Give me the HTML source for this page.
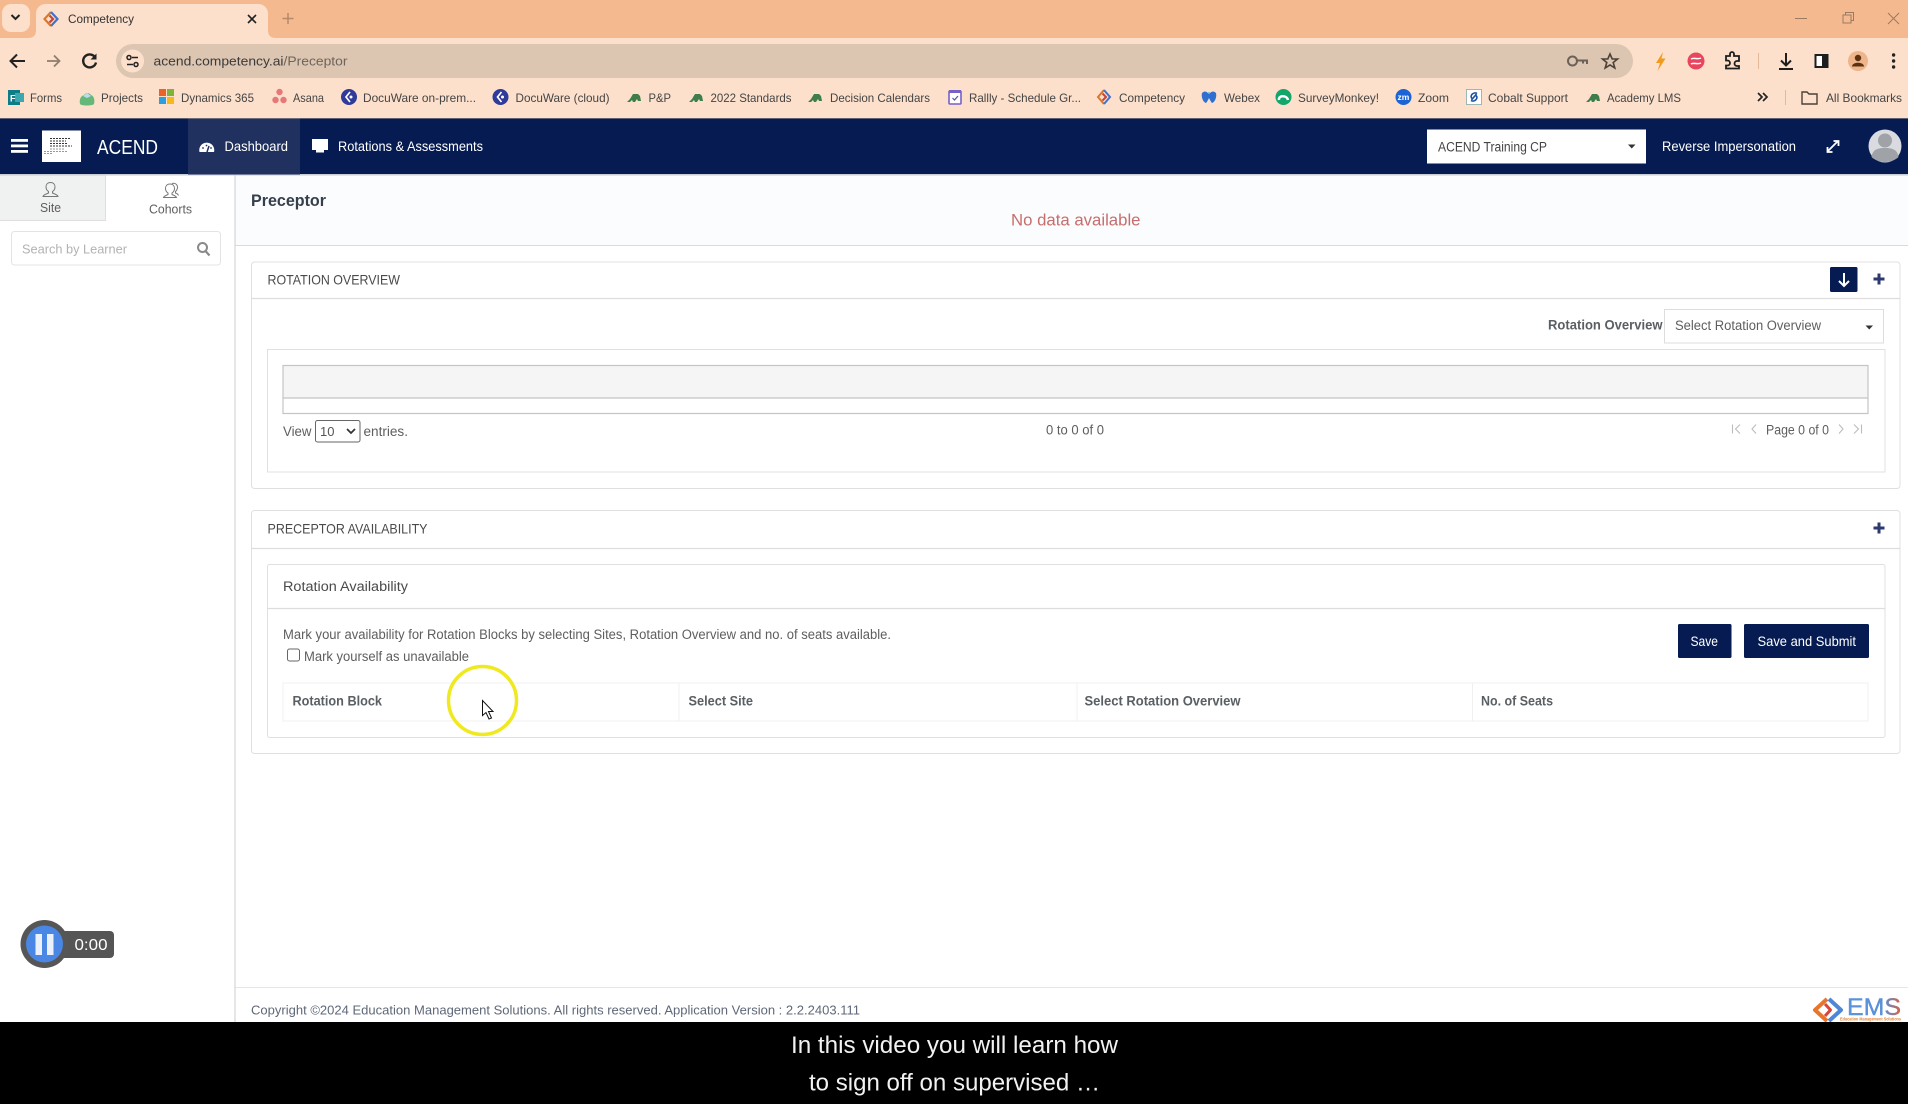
<!DOCTYPE html>
<html lang="en"><head><meta charset="utf-8"><title>Competency - Preceptor</title>
<style>
html,body{margin:0;padding:0;background:#fff;width:1908px;height:1104px;overflow:hidden}
svg{display:block;position:absolute;left:0;top:0;filter:blur(.35px)}
text{font-family:"Liberation Sans",sans-serif;white-space:pre}
.b{font-size:12px;fill:#444}
.n{font-size:14px;fill:#fff}
.t{font-size:13.5px;fill:#5e5e5e}
.h{font-size:14px;fill:#4a4a4a}
.s{font-size:13.5px;fill:#5a5f63;font-weight:700}
.l{fill:none;stroke:#ddd;stroke-width:1.2}
</style></head><body>
<svg width="1908" height="1104" viewBox="0 0 1908 1104" xmlns="http://www.w3.org/2000/svg">
<defs><linearGradient id="g" x1="0" x2="1" y1="0" y2="0"><stop offset="0" stop-color="#5b93dc"/><stop offset=".7" stop-color="#5b8fd8"/><stop offset="1" stop-color="#d9603f"/></linearGradient></defs>
<rect width="1908" height="1104" fill="#fff"/>
<!-- browser chrome -->
<rect width="1908" height="38" fill="#f4b98e"/>
<rect y="38" width="1908" height="80" fill="#fce0cb"/>
<rect y="118" width="1908" height="1" fill="#b9a99c"/>
<rect x="2" y="4" width="28" height="28" rx="9" fill="#fce0cb"/>
<path d="M11.500 15l4 4 4-4" fill="none" stroke="#222" stroke-width="2"/>
<path d="M28 38c6 0 8-3 8-8V14c0-6 4-10 10-10h212c6 0 10 4 10 10v16c0 5 2 8 8 8z" fill="#fce0cb"/>
<g fill="none" stroke-width="2.200"><path d="M51 12l-6.500 7 6.500 7" stroke="#d9782f"/><path d="M51 12l6.500 7-6.500 7" stroke="#3f73c9"/><path d="M49.500 15.500l3.500 3.500-3.500 3.500" stroke="#c4453c"/></g>
<text x="68" y="23" font-size="12" fill="#333" textLength="66" lengthAdjust="spacingAndGlyphs">Competency</text>
<path d="M248 15l8 8M256 15l-8 8" stroke="#222" stroke-width="1.600"/>
<path d="M288 13v11M282.500 18.500h11" stroke="#b58a6a" stroke-width="1.500"/>
<path d="M1795 18.500h12" stroke="#9a7b62"/><g fill="none" stroke="#9a7b62"><rect x="1843" y="15" width="8" height="8"/><path d="M1845.500 15v-2.500h8v8H1851"/><path d="M1888 13l11 11M1899 13l-11 11"/></g>
<rect x="116" y="44" width="1517" height="34" rx="17" fill="#dcc5b1"/>
<circle cx="132.600" cy="61" r="11.500" fill="#fce0cb"/>
<g fill="none" stroke="#222" stroke-width="1.500"><circle cx="129" cy="57.500" r="2"/><path d="M132 57.500h6M127 64.500h6"/><circle cx="136" cy="64.500" r="2"/></g>
<path d="M25 61H11M17 54.500L10.500 61l6.500 6.500" fill="none" stroke="#222" stroke-width="2"/>
<path d="M47 61h12M54 55.500l5.500 5.500-5.500 5.500" fill="none" stroke="#8f7d6e" stroke-width="1.800"/>
<path d="M95.500 58a6.500 6.500 0 1 0 .5 4.500" fill="none" stroke="#222" stroke-width="2.400"/><path d="M96.500 53.500v6h-6z" fill="#222"/>
<text x="153.500" y="65.500" font-size="13" fill="#3a3a3a" textLength="194" lengthAdjust="spacingAndGlyphs">acend.competency.ai<tspan fill="#6e645b">/Preceptor</tspan></text>
<g fill="none" stroke="#6b6158" stroke-width="2"><circle cx="1572.500" cy="61" r="4.500"/><path d="M1577 60.500h10v3.500M1583 60.500v3"/></g>
<path d="M1610 54l2.200 5h5.300l-4.300 3.500 1.600 5.500-4.800-3-4.800 3 1.600-5.500-4.300-3.500h5.300z" fill="none" stroke="#4b4137" stroke-width="1.600"/>
<path d="M1663 52l-7 11h4l-2.500 8 8-12.500h-4z" fill="#f29a1c"/>
<circle cx="1696" cy="61" r="8.500" fill="#e8465e"/><path d="M1691 59c3-2 6 1 10-1M1691 64c3-2 6 1 10-1" stroke="#fff" stroke-width="1.500" fill="none"/>
<path d="M1726 56h4v-2a2 2 0 0 1 4 0v2h5v5h-2a2.500 2.500 0 0 0 0 5h2v2.500h-13v-3h1.500a2.500 2.500 0 0 0 0-5H1726z" fill="none" stroke="#1e1e1e" stroke-width="1.800"/>
<rect x="1758" y="53" width="1" height="16" fill="#e7b896"/>
<path d="M1786 53v12M1781 60.500l5 5 5-5M1779 69h14" fill="none" stroke="#1e1e1e" stroke-width="2"/>
<rect x="1815.500" y="55" width="12" height="12" fill="#fff" stroke="#1e1e1e" stroke-width="2"/><rect x="1822" y="55" width="6" height="12" fill="#1e1e1e"/>
<circle cx="1858" cy="61" r="10" fill="#eeb48a"/><circle cx="1858" cy="58" r="3.200" fill="#5a3212"/><path d="M1852 66.500c0-5 12-5 12 0z" fill="#5a3212"/>
<g fill="#222"><circle cx="1893.600" cy="55" r="1.700"/><circle cx="1893.600" cy="61" r="1.700"/><circle cx="1893.600" cy="67" r="1.700"/></g>
<!-- bookmarks -->
<rect x="8" y="90" width="12" height="15" fill="#0e7c86"/><rect x="15" y="93" width="9" height="9" fill="#3aa8b0"/><text x="10" y="101.500" font-size="9" font-weight="700" fill="#fff">F</text>
<path d="M80 104c-1-5 1-8 4-9 1-2 5-3 7 0 3 1 4 5 3 9-1 2-13 2-14 0z" fill="#67b878"/><path d="M83 96l4-3 4 3-4 2z" fill="#b9dcef"/>
<rect x="159" y="89" width="7" height="7" fill="#e8622a"/><rect x="167" y="89" width="7" height="7" fill="#7eb33c"/><rect x="159" y="97" width="7" height="7" fill="#2c9fe0"/><rect x="167" y="97" width="7" height="7" fill="#f5b91c"/>
<g fill="#e87878"><circle cx="279.500" cy="92" r="3.200"/><circle cx="275.500" cy="100" r="3.200"/><circle cx="283.500" cy="100" r="3.200"/></g>
<g><circle cx="349" cy="97" r="8" fill="#2f3a9a"/><path d="M350 92l-4 5 4 5" stroke="#fff" stroke-width="1.700" fill="none"/><circle cx="351" cy="97" r="1.500" fill="#fff"/><circle cx="500.500" cy="97" r="8" fill="#2f3a9a"/><path d="M501.500 92l-4 5 4 5" stroke="#fff" stroke-width="1.700" fill="none"/><circle cx="502.500" cy="97" r="1.500" fill="#fff"/></g>
<g fill="#3f7d4c"><path d="M627 102l3-3 3-5h5l2 2 1 5h-3l-1-2-2 3h-2l-1-2-2 2z"/><path d="M689 102l3-3 3-5h5l2 2 1 5h-3l-1-2-2 3h-2l-1-2-2 2z"/><path d="M808 102l3-3 3-5h5l2 2 1 5h-3l-1-2-2 3h-2l-1-2-2 2z"/><path d="M1586 102l3-3 3-5h5l2 2 1 5h-3l-1-2-2 3h-2l-1-2-2 2z"/></g>
<rect x="949" y="91" width="12" height="13" rx="1" fill="#fff" stroke="#7561c9" stroke-width="1.600"/><rect x="949" y="90" width="12" height="3" fill="#7561c9"/><path d="M952.500 98l2 2 3.500-4" fill="none" stroke="#5c4bb0" stroke-width="1.200"/>
<g fill="none" stroke-width="2"><path d="M1104 90l-6 7 6 7" stroke="#d9782f"/><path d="M1104 90l6 7-6 7" stroke="#3f73c9"/><path d="M1102.500 93.500l3.500 3.500-3.500 3.500" stroke="#c4453c"/></g>
<path d="M1202 93c3-3 5-1 7 1 2-2 4-4 7-1 1 4-1 9-4 10-1-1-2-3-3-5-1 2-2 4-3 5-3-1-5-6-4-10z" fill="#2f6fd0"/><circle cx="1209" cy="93" r="1" fill="#4fc3e8"/>
<circle cx="1283.500" cy="97" r="8" fill="#12a66a"/><path d="M1279 100c-1-5 8-5 9 0" stroke="#fff" stroke-width="2.500" fill="none"/>
<circle cx="1403.500" cy="97" r="8" fill="#1c63d6"/><text x="1397.500" y="100" font-size="8.500" font-weight="700" fill="#fff">zm</text>
<rect x="1466.500" y="89.500" width="15" height="15" fill="#fff" stroke="#8aa" stroke-width=".8"/><path d="M1477 93.500c-3-2-8 2-5 5M1471 100.500c3 2 8-2 5-5M1471.500 100l5-6" stroke="#1c4fa5" stroke-width="1.600" fill="none"/>
<g>
<text class="b" y="102" x="30" textLength="32" lengthAdjust="spacingAndGlyphs">Forms</text>
<text class="b" y="102" x="101" textLength="42" lengthAdjust="spacingAndGlyphs">Projects</text>
<text class="b" y="102" x="181" textLength="73" lengthAdjust="spacingAndGlyphs">Dynamics 365</text>
<text class="b" y="102" x="293" textLength="31" lengthAdjust="spacingAndGlyphs">Asana</text>
<text class="b" y="102" x="363" textLength="113" lengthAdjust="spacingAndGlyphs">DocuWare on-prem...</text>
<text class="b" y="102" x="515.500" textLength="94" lengthAdjust="spacingAndGlyphs">DocuWare (cloud)</text>
<text class="b" y="102" x="648.500" textLength="22.500" lengthAdjust="spacingAndGlyphs">P&amp;P</text>
<text class="b" y="102" x="710.500" textLength="81" lengthAdjust="spacingAndGlyphs">2022 Standards</text>
<text class="b" y="102" x="830" textLength="100" lengthAdjust="spacingAndGlyphs">Decision Calendars</text>
<text class="b" y="102" x="969" textLength="112" lengthAdjust="spacingAndGlyphs">Rallly - Schedule Gr...</text>
<text class="b" y="102" x="1119" textLength="66" lengthAdjust="spacingAndGlyphs">Competency</text>
<text class="b" y="102" x="1224" textLength="36" lengthAdjust="spacingAndGlyphs">Webex</text>
<text class="b" y="102" x="1298" textLength="81" lengthAdjust="spacingAndGlyphs">SurveyMonkey!</text>
<text class="b" y="102" x="1418" textLength="31" lengthAdjust="spacingAndGlyphs">Zoom</text>
<text class="b" y="102" x="1488" textLength="80" lengthAdjust="spacingAndGlyphs">Cobalt Support</text>
<text class="b" y="102" x="1607" textLength="74" lengthAdjust="spacingAndGlyphs">Academy LMS</text>
<text class="b" y="102" x="1826" textLength="76" lengthAdjust="spacingAndGlyphs">All Bookmarks</text>
</g>
<path d="M1758 93l4 4-4 4M1763 93l4 4-4 4" fill="none" stroke="#222" stroke-width="1.700"/>
<rect x="1785" y="90" width="1" height="15" fill="#e7b896"/>
<path d="M1802 92h5l2 2h8v10h-15z" fill="none" stroke="#4b4137" stroke-width="1.400"/>
<!-- app nav -->
<rect y="118.500" width="1908" height="56" fill="#051b52"/>
<rect y="174" width="1908" height="1.500" fill="#c9cdd4"/>
<rect x="188" y="118.500" width="112" height="56" fill="#20305f"/>
<g fill="#fff"><rect x="11" y="139" width="17" height="2.800"/><rect x="11" y="144.500" width="17" height="2.800"/><rect x="11" y="150" width="17" height="2.800"/></g>
<rect x="42" y="130.500" width="39" height="31.500" fill="#fff"/>
<g stroke="#333" stroke-width="1"><path d="M50 138.500h20M50 141h16M50 143.500h17M50 146h22" stroke-dasharray="2 1"/><path d="M44 151.500h24M50 149h14M44 153.500h8" stroke="#999" stroke-dasharray="2 1"/></g>
<text x="97" y="154" font-size="20" fill="#fff" textLength="61" lengthAdjust="spacingAndGlyphs">ACEND</text>
<path d="M199.500 152a7.500 7.500 0 1 1 14.500 0z" fill="#fff"/><path d="M207 152l2-6" stroke="#20305f" stroke-width="1.500"/><g fill="#20305f"><circle cx="203" cy="148" r=".9"/><circle cx="206.500" cy="145.500" r=".9"/><circle cx="211" cy="148" r=".9"/></g>
<text class="n" x="224.500" y="151" textLength="63.500" lengthAdjust="spacingAndGlyphs">Dashboard</text>
<rect x="312" y="139" width="16" height="11" fill="#fff"/><rect x="316" y="150" width="8" height="2.500" fill="#fff"/>
<text class="n" x="338" y="151" textLength="145" lengthAdjust="spacingAndGlyphs">Rotations &amp; Assessments</text>
<rect x="1427" y="129.500" width="219" height="34" fill="#fff"/>
<text x="1438" y="151.500" font-size="13.500" fill="#444" textLength="109" lengthAdjust="spacingAndGlyphs">ACEND Training CP</text>
<path d="M1628 144.500h7.500l-3.750 4z" fill="#333"/>
<text class="n" x="1662" y="151" textLength="134" lengthAdjust="spacingAndGlyphs">Reverse Impersonation</text>
<path d="M1828 151l10-10M1833.500 141h5v5M1827.500 147v5h5" fill="none" stroke="#fff" stroke-width="1.800"/>
<circle cx="1885" cy="146" r="16.500" fill="#d9dbe0"/><circle cx="1885" cy="140.500" r="7" fill="#9fa3a8"/><path d="M1871.500 157c1-8 7-9 13.500-9s12.500 1 13.500 9c-3 3-8 5-13.500 5s-10.500-2-13.500-5z" fill="#9fa3a8"/>
<!-- sidebar -->
<rect x="234.500" y="175" width="1" height="847" fill="#ccc"/>
<rect y="175.500" width="105" height="45" fill="#f0f1f1"/><path d="M0 220.500h105.500V175" fill="none" stroke="#dfdfdf"/>
<g fill="none" stroke="#777" stroke-width="1"><path d="M50.500 182.500c-3 0-4.500 2-4.500 4.500 0 2 1 3.500 2.500 4.500v1.500c-2 1-5 1.500-5.500 3.500h15c-.5-2-3.500-2.500-5.500-3.500V191.500c1.500-1 2.500-2.500 2.500-4.500 0-2.500-1.500-4.500-4.500-4.500z"/>
<path d="M170 184c-3 0-4.500 2-4.500 4.500 0 2 1 3.500 2.500 4.500v1.500c-2 1-4 1.500-4.500 3h13c-.5-1.500-2.500-2-4.500-3V193c1.500-1 2.500-2.500 2.500-4.500 0-2.500-1.500-4.500-4.500-4.500zM172 183.500c3-1 5.500 1 5.500 4 0 2-1 3-2 4v1.500c1.500.5 2.500 1 3 2.500"/></g>
<text x="40" y="212" font-size="13" fill="#5e5e5e" textLength="21" lengthAdjust="spacingAndGlyphs">Site</text>
<text x="149" y="213.500" font-size="13" fill="#5e5e5e" textLength="43" lengthAdjust="spacingAndGlyphs">Cohorts</text>
<rect x="11.500" y="231.500" width="209" height="33.500" rx="3" fill="#fff" stroke="#e4e4e4"/>
<text x="22" y="253.500" font-size="13" fill="#b2b2b2" textLength="105" lengthAdjust="spacingAndGlyphs">Search by Learner</text>
<circle cx="202.500" cy="247.500" r="4.500" fill="none" stroke="#8a8a8a" stroke-width="2"/><path d="M205.500 251l4 4.500" stroke="#8a8a8a" stroke-width="2.200"/>
<!-- page header -->
<rect x="235.500" y="175.500" width="1673" height="70" fill="#fbfcfe"/>
<rect x="235.500" y="245" width="1673" height="1" fill="#d9dbde"/>
<text x="251" y="206" font-size="17" font-weight="700" fill="#36404c" textLength="75" lengthAdjust="spacingAndGlyphs">Preceptor</text>
<text x="1011" y="225.500" font-size="16.500" fill="#c66e6c" textLength="129.500" lengthAdjust="spacingAndGlyphs">No data available</text>
<!-- card 1 -->
<rect x="251.500" y="262" width="1648.500" height="226.500" rx="3" fill="#fff" stroke="#e0e0e0"/>
<path d="M251.500 298.500H1900" class="l"/>
<text class="h" x="267.500" y="284.500" textLength="132.500" lengthAdjust="spacingAndGlyphs">ROTATION OVERVIEW</text>
<rect x="1830" y="267" width="27.500" height="25" rx="1.500" fill="#051b52"/>
<path d="M1844 273v12.500M1839 281l5 5 5-5" fill="none" stroke="#fff" stroke-width="2"/>
<path d="M1879 273.500v11M1873.500 279h11" stroke="#2c3a70" stroke-width="3"/>
<text class="s" x="1548" y="329.500" textLength="114.500" lengthAdjust="spacingAndGlyphs">Rotation Overview</text>
<rect x="1664.500" y="309.500" width="219" height="33.500" fill="#fff" stroke="#ddd"/>
<text class="t" x="1675" y="330" textLength="146" lengthAdjust="spacingAndGlyphs">Select Rotation Overview</text>
<path d="M1865.500 325.500h7.500l-3.750 4z" fill="#333"/>
<rect x="267.500" y="349.500" width="1617.500" height="122.500" fill="#fff" stroke="#e0e0e0"/>
<rect x="283" y="365" width="1585" height="32.500" fill="#f5f5f5"/>
<rect x="283" y="365.500" width="1585" height="48" fill="none" stroke="#c4c4c4" stroke-width="1.200"/>
<path d="M283 398h1585" stroke="#c4c4c4" stroke-width="1.200"/>
<text class="t" x="283" y="436" textLength="28.500" lengthAdjust="spacingAndGlyphs">View</text>
<rect x="315.500" y="420.500" width="44.500" height="21.500" rx="2" fill="#fff" stroke="#666"/>
<text x="320" y="436" font-size="13" fill="#555">10</text>
<path d="M347 429l4 4 4-4" fill="none" stroke="#333" stroke-width="1.700"/>
<text class="t" x="363.500" y="436" textLength="44.500" lengthAdjust="spacingAndGlyphs">entries.</text>
<text class="t" x="1046" y="434.500" textLength="58" lengthAdjust="spacingAndGlyphs">0 to 0 of 0</text>
<text class="t" x="1766" y="434.500" textLength="63" lengthAdjust="spacingAndGlyphs">Page 0 of 0</text>
<g fill="none" stroke="#bcbcbc" stroke-width="1.100"><path d="M1732.500 424.500v9M1740 424.500l-4.500 4.500 4.500 4.500M1756 424.500l-4 4.500 4 4.500M1839 424.500l4 4.500-4 4.500M1854 424.500l4.500 4.500-4.500 4.500M1861.500 424.500v9"/></g>
<!-- card 2 -->
<rect x="251.500" y="510.500" width="1648.500" height="243" rx="3" fill="#fff" stroke="#e0e0e0"/>
<path d="M251.500 548.500H1900" class="l"/>
<text class="h" x="267.500" y="533.500" textLength="160" lengthAdjust="spacingAndGlyphs">PRECEPTOR AVAILABILITY</text>
<path d="M1879 522.500v11M1873.500 528h11" stroke="#2c3a70" stroke-width="3"/>
<rect x="267.500" y="564.500" width="1617.500" height="173" rx="2" fill="#fff" stroke="#e0e0e0"/>
<path d="M267.500 608.500H1885" class="l"/>
<text x="283" y="591" font-size="13.500" fill="#4a4a4a" textLength="125" lengthAdjust="spacingAndGlyphs">Rotation Availability</text>
<text class="t" x="283" y="639" textLength="608" lengthAdjust="spacingAndGlyphs">Mark your availability for Rotation Blocks by selecting Sites, Rotation Overview and no. of seats available.</text>
<rect x="287.500" y="649" width="12" height="12" rx="2" fill="#fff" stroke="#666"/>
<text class="t" x="304" y="661" textLength="165" lengthAdjust="spacingAndGlyphs">Mark yourself as unavailable</text>
<rect x="1678" y="624" width="53.500" height="34" rx="1.500" fill="#051b52"/>
<text x="1690.500" y="646" font-size="14" fill="#fff" textLength="27.500" lengthAdjust="spacingAndGlyphs">Save</text>
<rect x="1744" y="624" width="125" height="34" rx="1.500" fill="#051b52"/>
<text x="1757.500" y="646" font-size="14" fill="#fff" textLength="98.500" lengthAdjust="spacingAndGlyphs">Save and Submit</text>
<rect x="283" y="683" width="1585" height="38" fill="#fff" stroke="#f0f0f0"/>
<path d="M679 683v38M1077 683v38M1472.500 683v38" stroke="#f0f0f0"/>
<text class="s" x="292.500" y="705.500" textLength="89.500" lengthAdjust="spacingAndGlyphs">Rotation Block</text>
<text class="s" x="688.500" y="705.500" textLength="64.500" lengthAdjust="spacingAndGlyphs">Select Site</text>
<text class="s" x="1084.500" y="705.500" textLength="156" lengthAdjust="spacingAndGlyphs">Select Rotation Overview</text>
<text class="s" x="1481" y="705.500" textLength="72" lengthAdjust="spacingAndGlyphs">No. of Seats</text>
<!-- cursor highlight -->
<circle cx="482.500" cy="700.500" r="34" fill="none" stroke="#efe91f" stroke-width="3.500"/>
<path d="M482.500 700.500v15l3.500-3 3 6.500 2.500-1-3-6.500h4.500z" fill="#fff" stroke="#111" stroke-width="1"/>
<!-- footer -->
<rect x="235.500" y="987" width="1673" height="1" fill="#e6e6e6"/>
<text x="251" y="1014.500" font-size="12.500" fill="#5f6878" textLength="609" lengthAdjust="spacingAndGlyphs">Copyright ©2024 Education Management Solutions. All rights reserved. Application Version : 2.2.2403.111</text>
<g fill="none" stroke-width="4" stroke-linejoin="round"><path d="M1827 999l-12 11 12 11" stroke="#e8752c"/><path d="M1829 999l12 11-12 11" stroke="#4f86d6"/><path d="M1825 1004l5.500 6-5.500 6" stroke="#d8453c" stroke-width="3"/></g>
<text x="1847" y="1015" font-size="24" fill="url(#g)" stroke="url(#g)" stroke-width=".4" textLength="54" lengthAdjust="spacingAndGlyphs">EMS</text>
<text x="1840" y="1020.500" font-size="4.500" font-weight="700" fill="#e0843a" textLength="61" lengthAdjust="spacingAndGlyphs">Education Management Solutions</text>
<!-- recorder -->
<rect x="45" y="931" width="69" height="27" rx="4" fill="#555"/>
<circle cx="44.500" cy="944" r="24" fill="#565656"/>
<circle cx="44.500" cy="944" r="18.500" fill="#4a86e3"/>
<rect x="35.500" y="934" width="6.500" height="21" fill="#eaf1fb"/><rect x="47" y="934" width="6.500" height="21" fill="#eaf1fb"/>
<text x="74.500" y="950" font-size="16" fill="#fff" textLength="33" lengthAdjust="spacingAndGlyphs">0:00</text>
<!-- caption bar -->
<rect y="1022" width="1908" height="82" fill="#000"/>
<text x="791" y="1053" font-size="24" fill="#f2f2f2" textLength="327" lengthAdjust="spacingAndGlyphs">In this video you will learn how</text>
<text x="809" y="1090.500" font-size="24" fill="#f2f2f2" textLength="291" lengthAdjust="spacingAndGlyphs">to sign off on supervised …</text>
</svg>
</body></html>
